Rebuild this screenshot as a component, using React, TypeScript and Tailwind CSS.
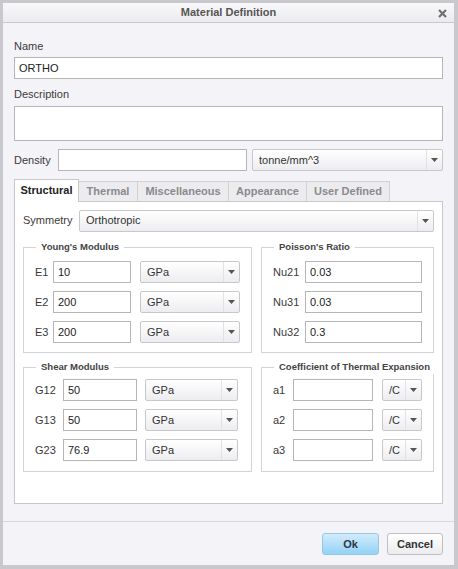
import type { ReactNode } from "react";

const FONT = "font-['Liberation_Sans',Arial,sans-serif]";

const TextBox = ({ value = "", className = "" }: { value?: string; className?: string }) => (
  <input
    readOnly
    value={value}
    className={`h-[22px] min-w-0 border border-[#b6b6ba] bg-white px-[4px] text-[11px] text-[#222] outline-none ${className}`}
  />
);

const Arrow = () => (
  <svg width="7" height="4" viewBox="0 0 7 4">
    <path d="M0 0h7L3.5 4z" fill="#555" />
  </svg>
);

const Select = ({ value, className = "" }: { value: string; className?: string }) => (
  <div
    className={`flex h-[22px] min-w-0 items-stretch rounded-[2px] border border-[#c8c8cc] bg-linear-to-b from-white to-[#ededf0] text-[11px] text-[#333] ${className}`}
  >
    <span className="flex flex-1 items-center truncate pl-[6px]">{value}</span>
    <span className="flex w-[16px] items-center justify-center border-l border-[#e2e2e6]">
      <Arrow />
    </span>
  </div>
);

const Group = ({
  title,
  children,
  className = "",
}: {
  title: string;
  children: ReactNode;
  className?: string;
}) => (
  <fieldset className={`min-w-0 border border-[#d3d3d7] px-[11px] ${className}`}>
    <legend className="ml-[1px] whitespace-nowrap px-[5px] text-[9.5px] font-bold leading-[14px] text-[#444]">
      {title}
    </legend>
    <div className="flex flex-col gap-[8px]">{children}</div>
  </fieldset>
);

const Row = ({ label, labelW, children }: { label: string; labelW: string; children: ReactNode }) => (
  <div className="flex items-center">
    <span className={`shrink-0 text-[11px] text-[#3a3a3a] ${labelW}`}>{label}</span>
    {children}
  </div>
);

const tabs = [
  { name: "Structural", w: "w-[65px]" },
  { name: "Thermal", w: "w-[59px]" },
  { name: "Miscellaneous", w: "w-[91px]" },
  { name: "Appearance", w: "w-[78px]" },
  { name: "User Defined", w: "w-[83px]" },
];

const youngs = [
  ["E1", "10"],
  ["E2", "200"],
  ["E3", "200"],
];
const poisson = [
  ["Nu21", "0.03"],
  ["Nu31", "0.03"],
  ["Nu32", "0.3"],
];
const shear = [
  ["G12", "50"],
  ["G13", "50"],
  ["G23", "76.9"],
];
const cte = ["a1", "a2", "a3"];

export default function App() {
  return (
    <div className={`h-[569px] w-[458px] bg-[#c9c8cd] pt-[3px] pr-[4px] pb-[4px] pl-[3px] ${FONT}`}>
      <div className="flex h-full flex-col bg-[#f4f4f8]">
        {/* title bar */}
        <div className="relative flex h-[20px] shrink-0 items-center justify-center border-b border-[#c9c9cd] bg-linear-to-b from-[#f8f8fa] to-[#ececef]">
          <span className="text-[11px] font-bold text-[#555]">Material Definition</span>
          <svg className="absolute right-[7px] top-[6px]" width="9" height="9" viewBox="0 0 9 9">
            <path d="M1 1l7 7M8 1L1 8" stroke="#707074" strokeWidth="2.2" />
          </svg>
        </div>

        <div className="flex flex-col px-[11px] pt-[16px]">
          <label className="h-[14px] text-[11px] leading-[14px] text-[#3a3a3a]">Name</label>
          <TextBox value="ORTHO" className="mt-[4px] w-full" />

          <label className="mt-[8px] h-[14px] text-[11px] leading-[14px] text-[#3a3a3a]">Description</label>
          <textarea
            readOnly
            className="mt-[5px] h-[35px] w-full resize-none border border-[#b6b6ba] bg-white outline-none"
          />

          <div className="mt-[8px] flex h-[22px] items-center">
            <span className="w-[44px] shrink-0 text-[11px] text-[#3a3a3a]">Density</span>
            <TextBox className="w-[189px]" />
            <Select value="tonne/mm^3" className="ml-[5px] flex-1" />
          </div>

          {/* tabs */}
          <div className="relative z-10 mt-[8px] -mb-[1px] flex h-[23px] items-end">
            {tabs.map((t, i) =>
              i === 0 ? (
                <div
                  key={t.name}
                  className={`flex h-[23px] items-center justify-center border-x border-t border-[#c8c8cc] bg-white pb-[1px] text-[11px] font-bold text-[#222] ${t.w}`}
                >
                  {t.name}
                </div>
              ) : (
                <div
                  key={t.name}
                  className={`mb-[1px] flex h-[20px] items-center justify-center border-t border-r border-[#d2d2d6] bg-[#ececef] text-[11px] font-bold text-[#8a8a8e] ${t.w}`}
                >
                  {t.name}
                </div>
              ),
            )}
          </div>

          {/* panel */}
          <div className="h-[303px] border border-[#c8c8cc] bg-white px-[8px] pt-[8px]">
            <div className="flex h-[21px] items-center">
              <span className="w-[56px] shrink-0 text-[11px] text-[#3a3a3a]">Symmetry</span>
              <Select value="Orthotropic" className="h-[21px] flex-1" />
            </div>

            <div className="mt-[9px] grid grid-cols-[229px_173px] gap-x-[9px] gap-y-[7px]">
              <Group title="Young's Modulus" className="pt-[7px] pb-[9px]">
                {youngs.map(([l, v]) => (
                  <Row key={l} label={l} labelW="w-[18px]">
                    <TextBox value={v} className="w-[78px]" />
                    <Select value="GPa" className="ml-[9px] flex-1" />
                  </Row>
                ))}
              </Group>

              <Group title="Poisson's Ratio" className="pt-[7px] pb-[9px]">
                {poisson.map(([l, v]) => (
                  <Row key={l} label={l} labelW="w-[32px]">
                    <TextBox value={v} className="flex-1" />
                  </Row>
                ))}
              </Group>

              <Group title="Shear Modulus" className="pt-[5px] pb-[10px]">
                {shear.map(([l, v]) => (
                  <Row key={l} label={l} labelW="w-[28px]">
                    <TextBox value={v} className="w-[74px]" />
                    <Select value="GPa" className="ml-[8px] w-[93px]" />
                  </Row>
                ))}
              </Group>

              <Group title="Coefficient of Thermal Expansion" className="pt-[5px] pb-[10px]">
                {cte.map((l) => (
                  <Row key={l} label={l} labelW="w-[20px]">
                    <TextBox className="w-[80px]" />
                    <Select value="/C" className="ml-[9px] flex-1" />
                  </Row>
                ))}
              </Group>
            </div>
          </div>
        </div>

        {/* footer */}
        <div className="mt-[17px] flex flex-1 justify-end gap-[8px] border-t border-[#d6d6da] pt-[11px] pr-[11px]">
          <button className="h-[22px] w-[57px] rounded-[3px] border border-[#95c7e7] bg-linear-to-b from-[#d3ecfb] to-[#92d1f6] text-[11px] font-bold text-[#2b3845]">
            Ok
          </button>
          <button className="h-[22px] w-[56px] rounded-[3px] border border-[#c0c0c4] bg-linear-to-b from-white to-[#ececef] text-[11px] font-bold text-[#333]">
            Cancel
          </button>
        </div>
      </div>
    </div>
  );
}
